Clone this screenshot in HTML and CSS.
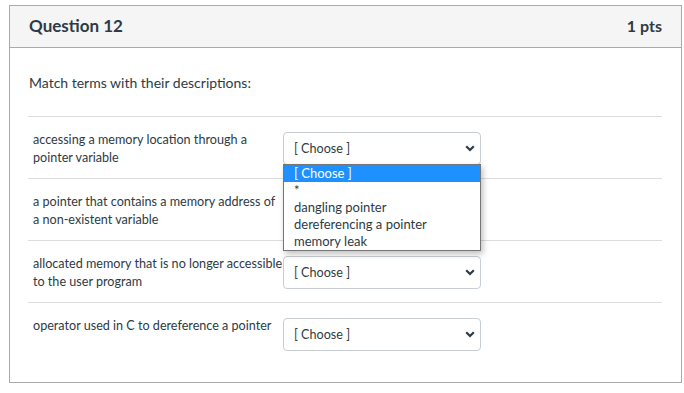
FILE: index.html
```html
<!DOCTYPE html>
<html lang="en">
<head>
  <meta charset="UTF-8" />
  <title>Question 12</title>
  <link rel="stylesheet" href="styles.css">
</head>
<body>
  <div class="question">
    <div class="header">
      <span class="title">Question 12</span>
      <span class="points">1 pts</span>
    </div>
    <div class="content">
      <p class="prompt">Match terms with their descriptions:</p>

      <div class="match-row">
        <div class="term">accessing a memory location through a pointer variable</div>
        <div class="choice">
          <select><option>[ Choose ]</option></select>
          <svg class="chevron" width="10" height="7" viewBox="0 0 10 7"><path d="M1.2 1.2 L5 5 L8.8 1.2" fill="none" stroke="#2d3b45" stroke-width="2.2"/></svg>
          <ul class="options">
            <li class="active">[ Choose ]</li>
            <li>*</li>
            <li>dangling pointer</li>
            <li>dereferencing a pointer</li>
            <li>memory leak</li>
          </ul>
        </div>
      </div>

      <div class="match-row">
        <div class="term">a pointer that contains a memory address of a non-existent variable</div>
        <div class="choice">
          <select><option>[ Choose ]</option></select>
          <svg class="chevron" width="10" height="7" viewBox="0 0 10 7"><path d="M1.2 1.2 L5 5 L8.8 1.2" fill="none" stroke="#2d3b45" stroke-width="2.2"/></svg>
        </div>
      </div>

      <div class="match-row">
        <div class="term">allocated memory that is no longer accessible to the user program</div>
        <div class="choice">
          <select><option>[ Choose ]</option></select>
          <svg class="chevron" width="10" height="7" viewBox="0 0 10 7"><path d="M1.2 1.2 L5 5 L8.8 1.2" fill="none" stroke="#2d3b45" stroke-width="2.2"/></svg>
        </div>
      </div>

      <div class="match-row">
        <div class="term">operator used in C to dereference a pointer</div>
        <div class="choice">
          <select><option>[ Choose ]</option></select>
          <svg class="chevron" width="10" height="7" viewBox="0 0 10 7"><path d="M1.2 1.2 L5 5 L8.8 1.2" fill="none" stroke="#2d3b45" stroke-width="2.2"/></svg>
        </div>
      </div>
    </div>
  </div>
</body>
</html>
```

FILE: styles.css
```css
body {
  margin: 0;
  background: #fff;
  font-family: Lato, "Open Sans", sans-serif;
  color: #2d3b45;
}
.question {
  margin: 5px 0 0 9px;
  width: 671px;
  border: 1px solid #aaa;
}
.header {
  display: flex;
  justify-content: space-between;
  align-items: center;
  height: 41px;
  padding: 0 19px;
  background: #f5f5f5;
  border-bottom: 1px solid #aaa;
  font-weight: bold;
}
.title {
  font-size: 17px;
  margin-top: -2px;
}
.points {
  font-size: 16px;
  margin-top: -2px;
}
.content {
  padding: 0 19px 18px 18px;
}
.prompt {
  margin: 0;
  padding: 25px 0 23px 1px;
  font-size: 14px;
  line-height: 20px;
}
.match-row {
  display: flex;
  align-items: flex-start;
  border-top: 1px solid #ddd;
  padding: 15px 0 13px 5px;
}
.term {
  width: 250px;
  font-size: 12.6px;
  line-height: 18px;
  margin: -1px 0 -2px;
}
.choice {
  position: relative;
  width: 198px;
  height: 33px;
}
.choice select {
  appearance: none;
  -webkit-appearance: none;
  width: 100%;
  height: 33px;
  margin: 0;
  padding: 0 10px;
  border: 1px solid #c7cdd1;
  border-radius: 4px;
  background: #fff;
  font-family: inherit;
  font-size: 12.6px;
  color: #2d3b45;
}
.chevron {
  position: absolute;
  right: 6px;
  top: 13px;
}
.options {
  position: absolute;
  top: 32px;
  left: 0;
  width: 196px;
  margin: 0;
  padding: 0;
  list-style: none;
  background: #fff;
  border: 1px solid #767676;
  box-shadow: 2px 3px 6px rgba(0, 0, 0, 0.25);
  font-size: 13px;
  line-height: 17px;
  z-index: 2;
}
.options li {
  padding: 0 10px;
}
.options li.active {
  background: #1e90ff;
  color: #fff;
}
```
